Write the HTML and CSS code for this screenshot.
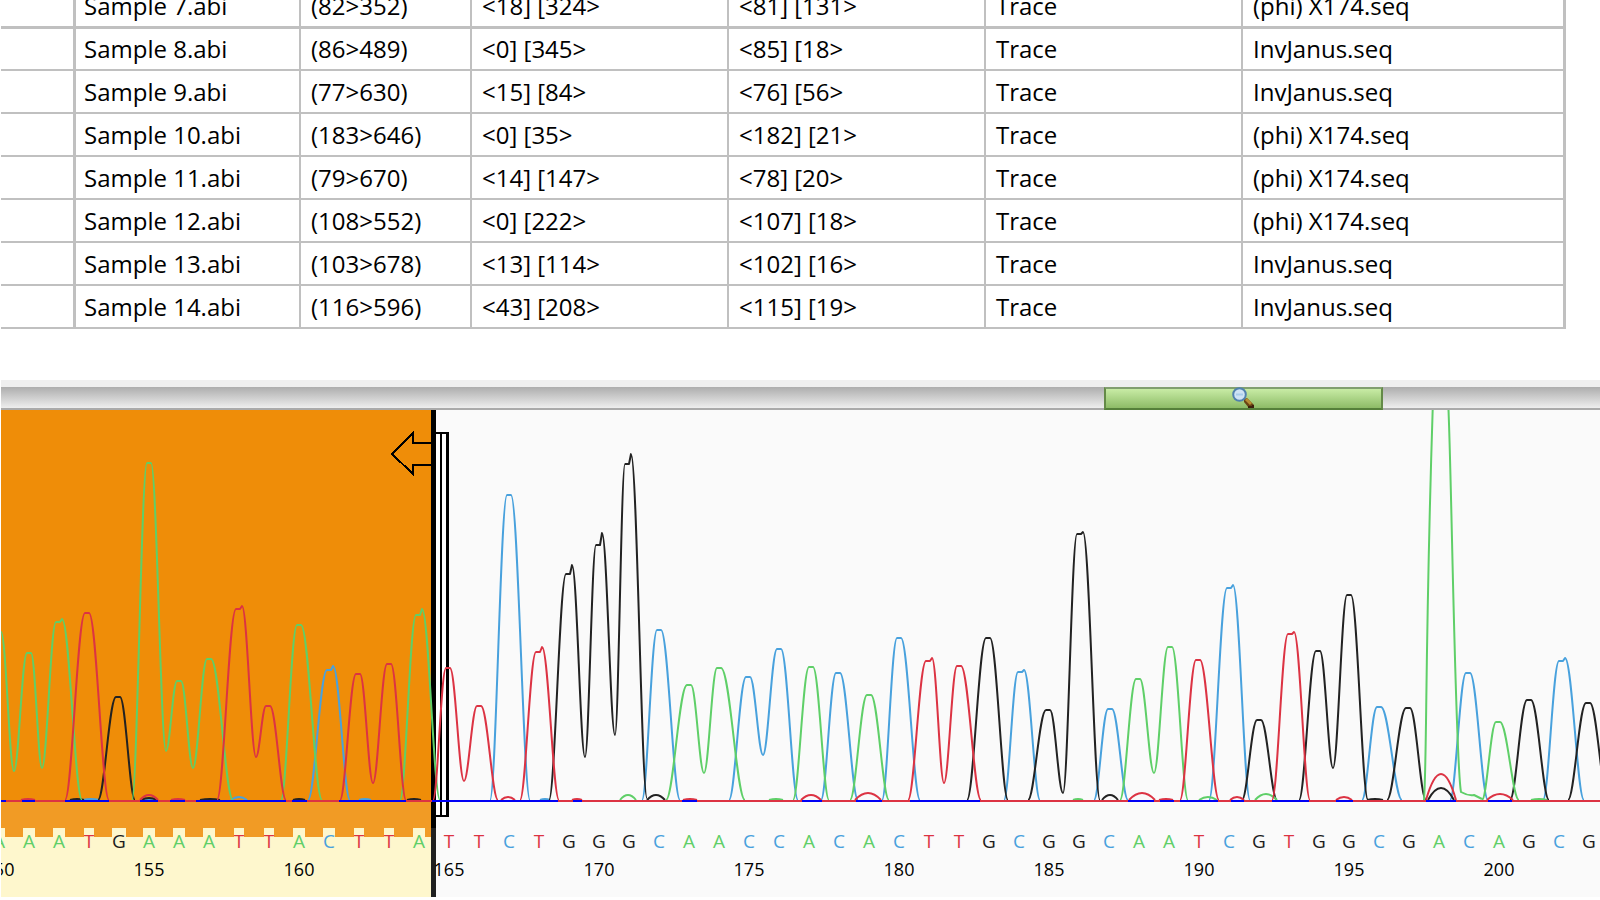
FILE: index.html
```html
<!DOCTYPE html>
<html lang="en">
<head>
  <meta charset="UTF-8">
  <title>Trace Viewer</title>
  <link rel="stylesheet" href="styles.css">
</head>
<body>

<div class="list-pane">
  <table class="samples">
    <colgroup>
      <col class="col-mark">
      <col class="col-name">
      <col class="col-range">
      <col class="col-wide">
      <col class="col-wide">
      <col class="col-wide">
      <col>
    </colgroup>
    <tbody>
      <tr class="group-end"><td></td><td>Sample 7.abi</td><td>(82&gt;352)</td><td>&lt;18] [324&gt;</td><td>&lt;81] [131&gt;</td><td>Trace</td><td>(phi) X174.seq</td></tr>
      <tr><td></td><td>Sample 8.abi</td><td>(86&gt;489)</td><td>&lt;0] [345&gt;</td><td>&lt;85] [18&gt;</td><td>Trace</td><td>InvJanus.seq</td></tr>
      <tr><td></td><td>Sample 9.abi</td><td>(77&gt;630)</td><td>&lt;15] [84&gt;</td><td>&lt;76] [56&gt;</td><td>Trace</td><td>InvJanus.seq</td></tr>
      <tr><td></td><td>Sample 10.abi</td><td>(183&gt;646)</td><td>&lt;0] [35&gt;</td><td>&lt;182] [21&gt;</td><td>Trace</td><td>(phi) X174.seq</td></tr>
      <tr><td></td><td>Sample 11.abi</td><td>(79&gt;670)</td><td>&lt;14] [147&gt;</td><td>&lt;78] [20&gt;</td><td>Trace</td><td>(phi) X174.seq</td></tr>
      <tr><td></td><td>Sample 12.abi</td><td>(108&gt;552)</td><td>&lt;0] [222&gt;</td><td>&lt;107] [18&gt;</td><td>Trace</td><td>(phi) X174.seq</td></tr>
      <tr><td></td><td>Sample 13.abi</td><td>(103&gt;678)</td><td>&lt;13] [114&gt;</td><td>&lt;102] [16&gt;</td><td>Trace</td><td>InvJanus.seq</td></tr>
      <tr><td></td><td>Sample 14.abi</td><td>(116&gt;596)</td><td>&lt;43] [208&gt;</td><td>&lt;115] [19&gt;</td><td>Trace</td><td>InvJanus.seq</td></tr>
    </tbody>
  </table>
</div>

<div class="splitter"></div>

<div class="zoom-bar">
  <button class="zoom-thumb" aria-label="Zoom">
    <svg width="22" height="22" viewBox="0 0 22 22">
      <path d="M12 12l3-1 7 7v3h-5l-5-6z" fill="#6b4413"/>
      <path d="M14 12l5 5" stroke="#b88d34" stroke-width="3"/>
      <path d="M16 20h5v-2" stroke="#3d200c" stroke-width="2" fill="none"/>
      <circle cx="7.5" cy="7.5" r="6.3" fill="#cfe3f5" stroke="#5181ae" stroke-width="2"/>
      <path d="M4 7.5h7" stroke="#a9cdea" stroke-width="2"/>
    </svg>
  </button>
</div>

<div class="viewer">
  <svg class="chart">
    <g transform="translate(-1 -410)">
      <rect x="1" y="410" width="430" height="392" fill="#ef8d08"/>
      <rect x="1" y="802" width="430" height="26" fill="#f19b25"/>
      <!-- trim handle -->
      <rect x="436" y="432" width="13" height="385" fill="#000"/>
      <rect x="436" y="434" width="4" height="381" fill="#fff"/>
      <rect x="442" y="434" width="4" height="381" fill="#fff"/>
      <rect x="431" y="410" width="5" height="418" fill="#000"/>
      <path d="M431 443h-18v-10l-21 21l21 20v-9h18" fill="none" stroke="#000" stroke-width="2" shape-rendering="crispEdges"/>
      <g id="traces" fill="none" stroke-width="2" stroke-linejoin="round"></g>
      <g id="baseline" stroke-width="2"></g>
    </g>
  </svg>
  <div class="bases" id="bases"></div>
</div>

<script>
  const BASE = 800;
  const colors = { A: '#5fcf68', C: '#48a1dd', G: '#222222', T: '#dc3343' };
  const sequence = 'AAATGAAATTACTTATTCTGGGCAACCACACTTGCGGCAATCGTGGCGACAGCG';
  const firstBase = 150;
  const trimmed = 15;

  // every run: foot, peak, valley, peak ... foot.  [x, y, spike]
  const runs = {
    C: [
      [[308, BASE], [329, 670, 666], [350, BASE]],
      [[490, BASE], [509, 495], [530, BASE]],
      [[642, BASE], [659, 630], [680, BASE]],
      [[729, BASE], [748, 677], [763, 755], [779, 649], [798, BASE]],
      [[821, BASE], [838, 673], [858, BASE]],
      [[882, BASE], [899, 638], [920, BASE]],
      [[1004, BASE], [1020, 672, 670], [1040, BASE]],
      [[1094, BASE], [1110, 709], [1128, BASE]],
      [[1209, BASE], [1229, 588, 585], [1250, BASE]],
      [[1362, BASE], [1379, 707], [1402, BASE]],
      [[1450, BASE], [1468, 673], [1488, BASE]],
      [[1543, BASE], [1561, 661, 658], [1584, BASE]]
    ],
    G: [
      [[98, BASE], [118, 697], [135, BASE]],
      [[549, BASE], [568, 574, 565], [585, 757], [598, 545, 533], [615, 735], [627, 464, 454], [647, 798]],
      [[967, BASE], [988, 638], [1008, BASE]],
      [[1028, BASE], [1048, 710], [1063, 793], [1079, 534, 532], [1100, BASE]],
      [[1242, BASE], [1259, 720], [1277, BASE]],
      [[1299, BASE], [1318, 651], [1333, 768], [1349, 595], [1368, BASE]],
      [[1387, BASE], [1408, 708], [1426, BASE]],
      [[1510, BASE], [1529, 700], [1549, BASE]],
      [[1568, BASE], [1588, 703], [1608, BASE]]
    ],
    A: [
      [[-20, BASE], [-1, 632], [14, 771], [29, 653], [42, 768], [58, 622, 619], [82, BASE]],
      [[132, BASE], [149, 463], [166, 751], [179, 681], [193, 768], [209, 659], [233, BASE]],
      [[281, BASE], [299, 625], [322, BASE]],
      [[400, BASE], [418, 615, 609], [440, BASE]],
      [[666, BASE], [689, 685], [704, 773], [719, 668], [745, BASE]],
      [[793, BASE], [811, 667], [829, BASE]],
      [[850, BASE], [869, 695], [889, BASE]],
      [[1120, BASE], [1138, 679], [1154, 773], [1170, 647], [1188, BASE]],
      [[1482, BASE], [1498, 722], [1519, BASE]]
    ],
    T: [
      [[65, BASE], [87, 613], [109, BASE]],
      [[217, BASE], [238, 609, 606], [256, 757], [268, 706], [286, BASE]],
      [[340, BASE], [358, 674], [373, 783], [389, 664], [406, BASE]],
      [[433, BASE], [448, 668], [464, 781], [479, 706], [498, BASE]],
      [[520, BASE], [538, 652, 647], [559, BASE]],
      [[908, BASE], [928, 661, 658], [944, 783], [959, 666], [981, BASE]],
      [[1180, BASE], [1198, 660], [1219, BASE]],
      [[1272, BASE], [1290, 634, 632], [1310, BASE]]
    ]
  };

  // low noise bumps: [x, y, half width]
  const bumps = {
    C: [[91, 799, 8], [149, 799, 7], [239, 797, 8], [365, 799, 6], [545, 799, 5]],
    G: [[77, 799, 7], [149, 798, 8], [210, 799, 10], [299, 799, 6], [414, 799, 7], [656, 795, 9], [1110, 795, 8], [1375, 799, 8], [1441, 788, 13]],
    A: [[628, 795, 8], [776, 799, 7], [1078, 799, 5], [1208, 797, 9], [1266, 794, 11], [1539, 799, 8]],
    T: [[28, 799, 7], [149, 795, 9], [178, 799, 7], [508, 797, 7], [577, 799, 5], [690, 799, 7], [811, 795, 10], [868, 793, 13], [1142, 793, 13], [1166, 799, 7], [1237, 797, 7], [1344, 797, 8], [1441, 774, 15], [1500, 794, 13]]
  };

  const blueParts = [[1, 6], [22, 35], [65, 109], [140, 158], [170, 185], [196, 286], [292, 307], [339, 406],
    [432, 558], [573, 582], [682, 697], [802, 822], [856, 882], [910, 980], [1128, 1154], [1160, 1174],
    [1180, 1218], [1231, 1244], [1272, 1309], [1336, 1353], [1426, 1456], [1488, 1512]];

  function runPath(points) {
    let d = `M${points[0][0]} ${points[0][1]}`;
    for (let i = 1; i < points.length; i++) {
      const [px, py] = points[i - 1];
      const [x, y, spike] = points[i];
      if (i % 2 === 1) {
        // up to a peak
        const end = x - 2;
        const dx = end - px;
        d += ` C${px + dx * 0.35} ${py} ${end - dx * 0.38} ${y} ${end} ${y} H${x + 2}`;
        if (spike) d += ` L${x + 4} ${spike}`;
      } else {
        // down to a valley or to the foot
        const start = points[i - 1][2] ? px + 4 : px + 2;
        const dx = x - start;
        const top = points[i - 1][2] || py;
        d += ` C${start + dx * 0.38} ${top} ${x - dx * 0.35} ${y} ${x} ${y}`;
      }
    }
    return d;
  }

  function bumpPath([x, y, w]) {
    return ` M${x - w} ${BASE} Q${x - w / 2} ${y} ${x} ${y} Q${x + w / 2} ${y} ${x + w} ${BASE}`;
  }

  let traceHtml = '';
  ['C', 'G', 'A', 'T'].forEach(base => {
    let d = runs[base].map(runPath).join(' ') + bumps[base].map(bumpPath).join('');
    // base 198 goes past the top of the plot
    if (base === 'A') d += ' M1424 800 C1427 760 1425 640 1433 400 M1448 400 C1451 440 1455 760 1461 792 Q1468 796 1474 795 L1482 799';
    traceHtml += `<path d="${d}" stroke="${colors[base]}"/>`;
  });
  document.getElementById('traces').innerHTML = traceHtml;

  document.getElementById('baseline').innerHTML =
    '<path d="M1 801H4000" stroke="#dc3343"/>' +
    `<path d="${blueParts.map(([a, b]) => `M${a} 801H${b}`).join('')}" stroke="#0000f5"/>`;

  document.getElementById('bases').innerHTML = [...sequence].map((base, i) => {
    const n = firstBase + i;
    return `<div class="base${i < trimmed ? ' trimmed' : ''}">
      <span class="letter base-${base.toLowerCase()}">${base}</span>
      ${n % 5 === 0 ? `<span class="number">${n}</span>` : ''}
    </div>`;
  }).join('');
</script>

</body>
</html>
```
FILE: styles.css
```css
* {
  box-sizing: border-box;
}

body {
  margin: 0;
  padding: 0 0 3px 1px;
  height: 100vh;
  display: flex;
  flex-direction: column;
  overflow: hidden;
  background: #fff;
  color: #000;
  font-family: "Open Sans", "Noto Sans", sans-serif;
}

/* Sample list */
.list-pane {
  flex: 1;
  min-height: 0;
  display: flex;
  flex-direction: column;
  justify-content: flex-end;
  padding: 0 34px 51px 0;
  overflow: hidden;
}

.samples {
  width: 100%;
  table-layout: fixed;
  border-collapse: separate;
  border-spacing: 0;
  font-size: 24px;
  line-height: 32px;
}

.col-mark {
  width: 75px;
}

.col-name {
  width: 225px;
}

.col-range {
  width: 171px;
}

.col-wide {
  width: 257px;
}

.samples td {
  height: 43px;
  padding: 0 10px;
  border-right: 2px solid #c0c0c0;
  border-bottom: 2px solid #c0c0c0;
  white-space: nowrap;
}

.samples td:first-child,
.samples td:last-child {
  border-right-width: 3px;
}

.samples td:nth-child(2) {
  padding-left: 8px;
}

.samples .group-end td {
  border-bottom-width: 3px;
}

.samples .group-end + tr td {
  height: 42px;
}

.splitter {
  height: 7px;
  background: #efefef;
}

/* Zoom bar */
.zoom-bar {
  height: 23px;
  border-bottom: 2px solid #aaa;
  background: linear-gradient(#adadad, #eee);
}

.zoom-thumb {
  display: flex;
  justify-content: center;
  width: 17.4%;
  height: 23px;
  margin: 0 0 0 69%;
  padding: 0;
  border: 2px solid #648a48;
  border-top-color: #829f70;
  border-bottom-color: #55803a;
  background: linear-gradient(#c8eba5, #8dbc67);
}

.zoom-thumb svg {
  flex: none;
  margin-top: -2px;
}

/* Chromatogram */
.viewer {
  background: #fafafa;
  overflow: hidden;
}

.chart {
  display: block;
  width: 100%;
  height: 418px;
}

.bases {
  display: flex;
  height: 69px;
  background:
    linear-gradient(#202020, #202020) 430px 0 / 5px 100% no-repeat,
    linear-gradient(#f19b25 9px, #fef7cd 9px) 0 0 / 430px 100% no-repeat;
}

.base {
  flex: none;
  display: flex;
  flex-direction: column;
  align-items: center;
  width: 30px;
}

.base:first-child {
  margin-left: -17px;
}

.letter {
  font-size: 19px;
  font-weight: 500;
  line-height: 27px;
}

.trimmed .letter {
  background: #fef7cd;
}

.base-a {
  color: #5fcf68;
}

.base-c {
  color: #48a1dd;
}

.base-g {
  color: #1c1c1c;
}

.base-t {
  color: #dc3343;
}

.number {
  font-size: 18px;
  line-height: 28px;
}
```
